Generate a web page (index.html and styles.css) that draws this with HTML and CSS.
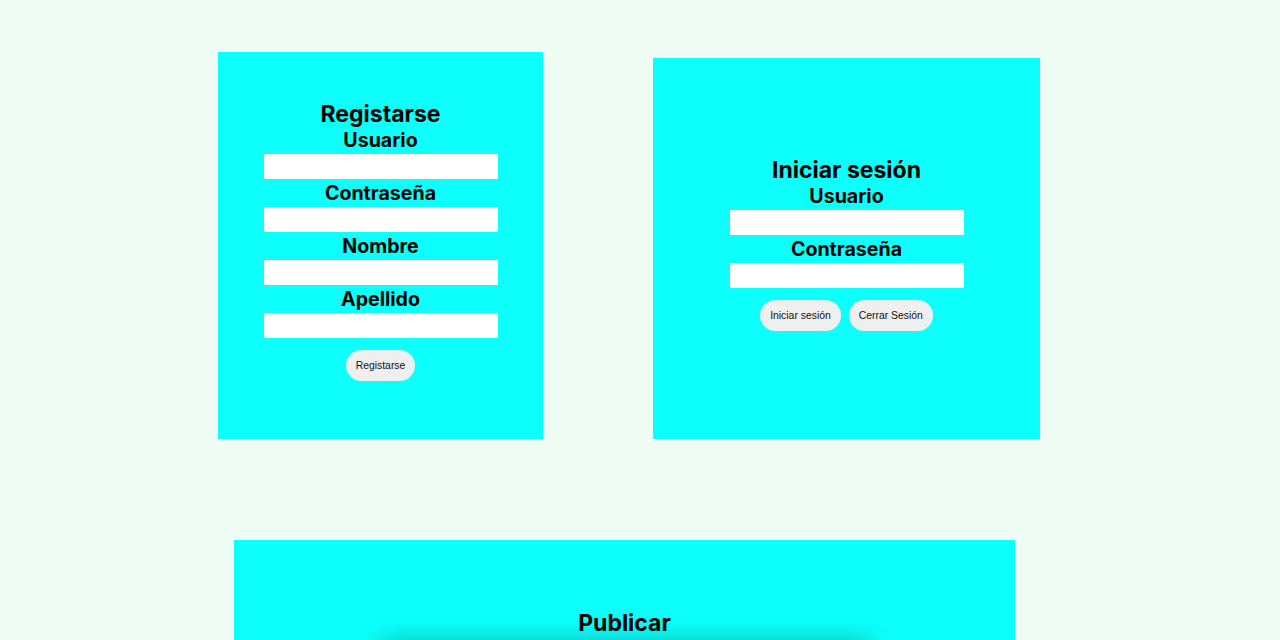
FILE: index.html
```html
<!DOCTYPE html>
<html lang="es">
<head>
<meta charset="utf-8">
<title>Formularios</title>
<link rel="stylesheet" href="styles.css">
</head>
<body>
<div class="page">
  <div class="top-row">
    <form class="card register">
      <h2 class="title">Registarse</h2>
      <label class="label">Usuario</label>
      <input class="field" type="text">
      <label class="label">Contraseña</label>
      <input class="field" type="password">
      <label class="label">Nombre</label>
      <input class="field" type="text">
      <label class="label">Apellido</label>
      <input class="field" type="text">
      <div class="actions">
        <button class="btn" type="button">Registarse</button>
      </div>
    </form>
    <form class="card login">
      <h2 class="title">Iniciar sesión</h2>
      <label class="label">Usuario</label>
      <input class="field" type="text">
      <label class="label">Contraseña</label>
      <input class="field" type="password">
      <div class="actions">
        <button class="btn" type="button">Iniciar sesión</button>
        <button class="btn" type="button">Cerrar Sesión</button>
      </div>
    </form>
  </div>
  <section class="card publish">
    <h2 class="title">Publicar</h2>
    <div class="publish-box"></div>
  </section>
</div>
</body>
</html>
```
FILE: styles.css
```css
html, body {
  margin: 0;
  padding: 0;
}
body {
  background: #effcf4;
  font-family: Inter, "Noto Sans", sans-serif;
  color: #000;
  overflow: hidden;
}
.page {
  padding-top: 52px;
  padding-left: 218px;
}
.top-row {
  display: flex;
  align-items: flex-end;
  gap: 110px;
}
.card {
  background: #0cfffa;
  display: flex;
  flex-direction: column;
  align-items: center;
  gap: 2px;
  box-sizing: border-box;
  margin: 0;
}
.register {
  width: 325px;
  height: 387px;
  padding-top: 51px;
}
.login {
  width: 387px;
  height: 381px;
  padding-top: 101px;
}
.title {
  margin: 0;
  font-size: 23px;
  font-weight: 700;
  line-height: 23px;
}
.label {
  display: block;
  font-size: 19.6px;
  font-weight: 700;
  line-height: 24px;
}
.field {
  width: 234px;
  height: 25px;
  border: none;
  background: #fff;
  box-sizing: border-box;
  margin: 0;
  padding: 0 4px;
}
.actions {
  display: flex;
  gap: 8px;
  margin-top: 10px;
}
.btn {
  height: 31px;
  padding: 0 10px;
  border: none;
  border-radius: 16px;
  background: #efefef;
  color: #111;
  font-family: "Liberation Sans", Arial, sans-serif;
  font-size: 10.4px;
}
.publish {
  width: 781px;
  height: 400px;
  margin-top: 101px;
  margin-left: 16px;
  padding-top: 72px;
}
.publish-box {
  width: 490px;
  height: 200px;
  margin-top: 4px;
  background: #0cfffa;
  box-shadow: 0 0 24px rgba(0, 0, 0, 0.28);
}
```
